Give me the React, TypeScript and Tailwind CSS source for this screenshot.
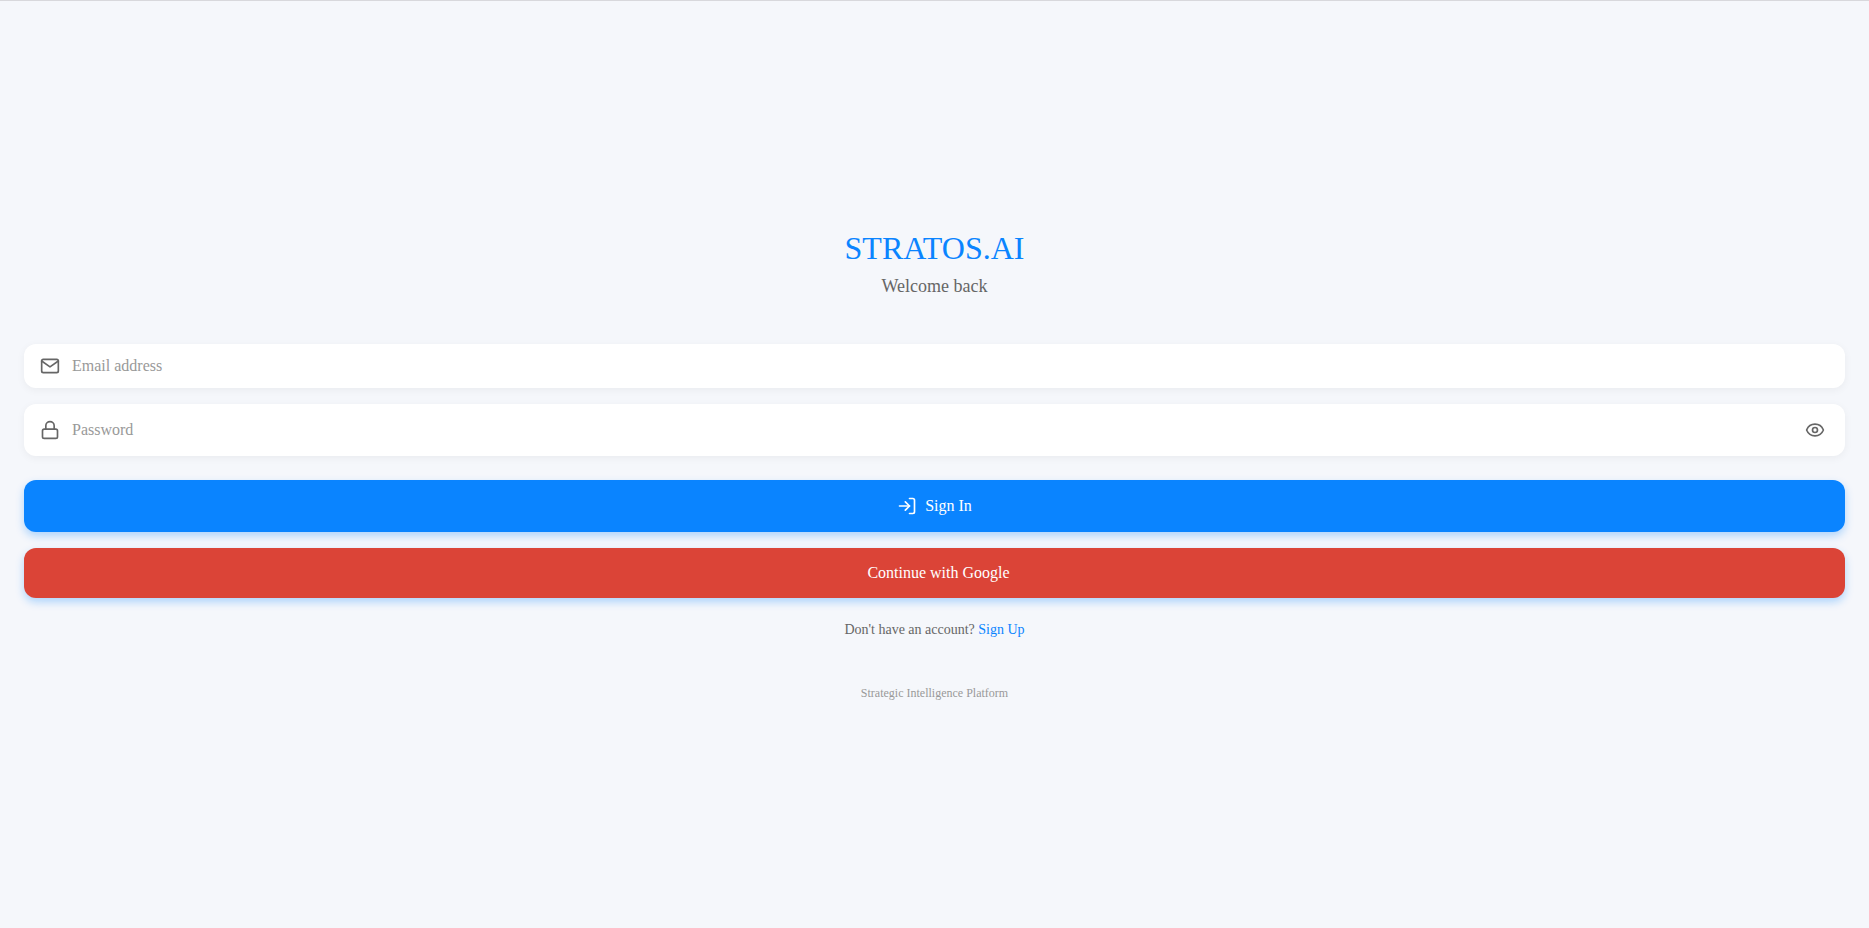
import { useState } from 'react'
import type { FormEvent, ReactNode } from 'react'
import { Eye, EyeOff, Lock, LogIn } from 'lucide-react'
import { FiMail } from 'react-icons/fi'

type FieldProps = {
  id: string
  label: string
  type: string
  value: string
  icon: ReactNode
  onChange: (value: string) => void
  children?: ReactNode
}

function Field({ id, label, type, value, icon, onChange, children }: FieldProps) {
  return (
    <div className="flex items-center rounded-xl bg-white px-4 py-3 text-[#666666] shadow-[0_2px_8px_rgba(0,0,0,0.05)]">
      <label htmlFor={id} aria-label={label} className="mr-3 shrink-0">
        {icon}
      </label>
      <input
        id={id}
        type={type}
        value={value}
        placeholder={label}
        onChange={(event) => onChange(event.target.value)}
        className="h-5 min-w-0 flex-1 bg-transparent text-base leading-5 text-[#1c1c1e] outline-none placeholder:text-[#999999]"
      />
      {children}
    </div>
  )
}

export default function App() {
  const [email, setEmail] = useState('')
  const [password, setPassword] = useState('')
  const [showPassword, setShowPassword] = useState(false)

  const handleSubmit = (event: FormEvent) => {
    event.preventDefault()
  }

  return (
    <main className="flex min-h-screen flex-col justify-center border-t border-[#d8d8dc] bg-[#f5f7fb] px-6 font-['Liberation_Serif','Times_New_Roman',serif]">
      <header className="mb-12 text-center">
        <h1 className="mb-2 text-[32px] leading-[39px] text-[#0a84ff]">STRATOS.AI</h1>
        <p className="text-lg leading-5 text-[#666666]">Welcome back</p>
      </header>

      <form onSubmit={handleSubmit} className="flex flex-col gap-4">
        <Field
          id="email"
          label="Email address"
          type="email"
          value={email}
          icon={<FiMail size={20} />}
          onChange={setEmail}
        />
        <Field
          id="password"
          label="Password"
          type={showPassword ? 'text' : 'password'}
          value={password}
          icon={<Lock size={20} />}
          onChange={setPassword}
        >
          <button
            type="button"
            aria-label={showPassword ? 'Hide password' : 'Show password'}
            onClick={() => setShowPassword(!showPassword)}
            className="cursor-pointer p-1"
          >
            {showPassword ? <EyeOff size={20} /> : <Eye size={20} />}
          </button>
        </Field>

        <button
          type="submit"
          className="mt-2 flex cursor-pointer items-center justify-center gap-2 rounded-xl bg-[#0a84ff] p-4 text-base leading-5 text-white shadow-[0_4px_8px_rgba(10,132,255,0.3)]"
        >
          <LogIn size={20} />
          Sign In
        </button>
        <button
          type="button"
          className="flex cursor-pointer items-center justify-center rounded-xl bg-[#db4437] p-4 text-base leading-[18px] text-white shadow-[0_4px_8px_rgba(10,132,255,0.3)]"
        >
          <span className="ml-2">Continue with Google</span>
        </button>
      </form>

      <p className="mt-6 text-center text-sm leading-4 text-[#666666]">
        Don't have an account?{' '}
        <a href="#signup" className="text-[#0a84ff]">
          Sign Up
        </a>
      </p>

      <footer className="mt-12 text-center text-xs leading-[14px] text-[#999999]">
        Strategic Intelligence Platform
      </footer>
    </main>
  )
}
